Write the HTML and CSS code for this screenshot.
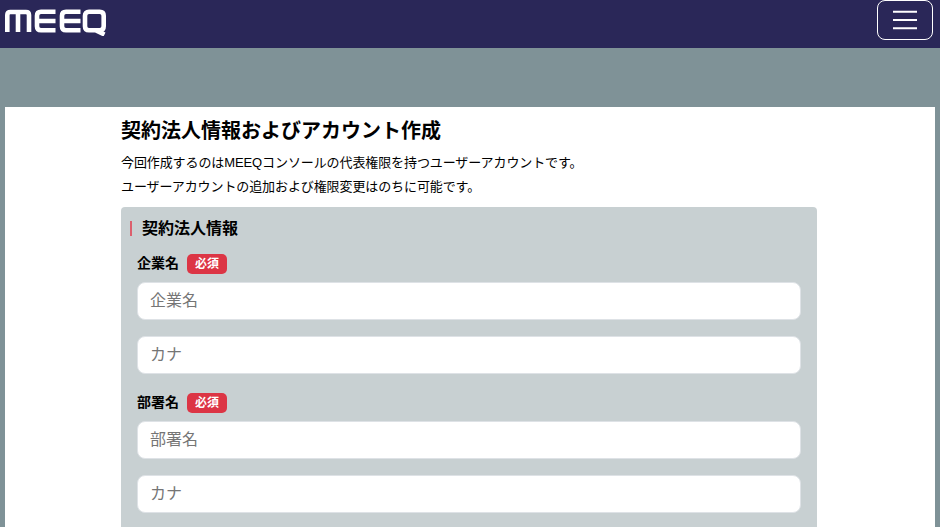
FILE: index.html
```html
<!DOCTYPE html>
<html lang="ja">
<head>
<meta charset="utf-8">
<title>契約法人情報およびアカウント作成</title>
<link rel="stylesheet" href="styles.css">
</head>
<body>
<header class="navbar">
  <svg class="logo" viewBox="0 0 101 28" role="img" aria-label="MEEQ">
    <g fill="none" stroke="#fff" stroke-width="4.600">
      <path d="M2.300 24V7q0-3 3-3h15.700q3 0 3 3v17M13 4v20"/>
      <path d="M50.500 3.800H36q-4 0-4 4v10.400q0 4 4 4h14.500M32 13h18.500"/>
      <path d="M75.500 3.800H61q-4 0-4 4v10.400q0 4 4 4h14.500M57 13h18.500"/>
      <path d="M84 3.800h10.700q4 0 4 4v10.400q0 4-4 4H84q-4 0-4-4V7.800q0-4 4-4zM91 22.500l8.500 4"/>
    </g>
  </svg>
  <button class="toggler" type="button" aria-label="メニュー">
    <svg viewBox="0 0 24 30" class="toggler-icon"><path d="M0 6.800h24M0 15h24M0 23.200h24" stroke="#fff" stroke-width="2" fill="none"/></svg>
  </button>
</header>
<main class="page">
  <div class="sheet">
    <div class="content">
      <h1 class="title">契約法人情報およびアカウント作成</h1>
      <p class="lead">今回作成するのはMEEQコンソールの代表権限を持つユーザーアカウントです。</p>
      <p class="lead">ユーザーアカウントの追加および権限変更はのちに可能です。</p>
      <section class="panel">
        <h2 class="panel-title">契約法人情報</h2>
        <div class="field">
          <div class="label-row"><label class="label">企業名</label><span class="badge">必須</span></div>
          <input class="input" type="text" placeholder="企業名">
          <input class="input" type="text" placeholder="カナ">
        </div>
        <div class="field">
          <div class="label-row"><label class="label">部署名</label><span class="badge">必須</span></div>
          <input class="input" type="text" placeholder="部署名">
          <input class="input" type="text" placeholder="カナ">
        </div>
      </section>
    </div>
  </div>
</main>
</body>
</html>
```
FILE: styles.css
```css
* { box-sizing: border-box; }
html, body { margin: 0; height: 527px; overflow: hidden; }
body {
  background: #7f9297;
  color: #000;
  font-family: "Liberation Sans", "Noto Sans CJK JP", sans-serif;
  display: flex;
  flex-direction: column;
}
.navbar {
  height: 48px;
  background: #2a2758;
  display: flex;
  align-items: flex-start;
  justify-content: space-between;
  padding: 0 7px 0 5px;
  flex: none;
}
.logo { width: 101px; height: 28px; display: block; margin-top: 8px; }
.toggler {
  width: 56px;
  height: 40px;
  padding: 0;
  background: transparent;
  border: 1px solid #fff;
  border-radius: 8px;
  display: flex;
  align-items: center;
  justify-content: center;
}
.toggler-icon { width: 24px; height: 30px; display: block; }
.page { flex: 1; padding: 59px 5px 0; min-height: 0; }
.sheet { background: #fff; height: 100%; padding: 0 116px; overflow: hidden; }
.content { width: 696px; }
.title { margin: 0; padding-top: 12px; font-size: 20px; line-height: 24px; font-weight: 700; }
.lead { margin: 8px 0 0; font-size: 13px; line-height: 16px; letter-spacing: -0.1px; }
.title + .lead { margin-top: 12px; }
.panel {
  margin-top: 12px;
  background: #c8d0d2;
  border-radius: 4px;
  padding: 12px 16px 40px;
}
.panel-title {
  margin: 0 0 0 -8px;
  padding-left: 13px;
  font-size: 16px;
  line-height: 20px;
  font-weight: 700;
  position: relative;
}
.panel-title::before {
  content: "";
  position: absolute;
  left: 1px;
  top: 2px;
  width: 2px;
  height: 15px;
  background: #dc5f6d;
}
.field { margin-top: 15px; }
.field + .field { margin-top: 19px; }
.label-row { display: flex; align-items: center; gap: 8px; height: 20px; }
.label { font-size: 14px; font-weight: 700; line-height: 18px; padding-bottom: 2px; }
.badge {
  background: #dc3545;
  color: #fff;
  font-size: 12px;
  font-weight: 700;
  line-height: 20px;
  height: 20px;
  width: 40px;
  text-align: center;
  border-radius: 5px;
}
.input {
  display: block;
  width: 100%;
  height: 38px;
  margin-top: 8px;
  padding: 0 12px;
  border: 1px solid #dee2e6;
  border-radius: 8px;
  background: #fff;
  font: 16px "Liberation Sans", "Noto Sans CJK JP", sans-serif;
}
.input + .input { margin-top: 16px; }
.input::placeholder { color: #757575; opacity: 1; }
```
